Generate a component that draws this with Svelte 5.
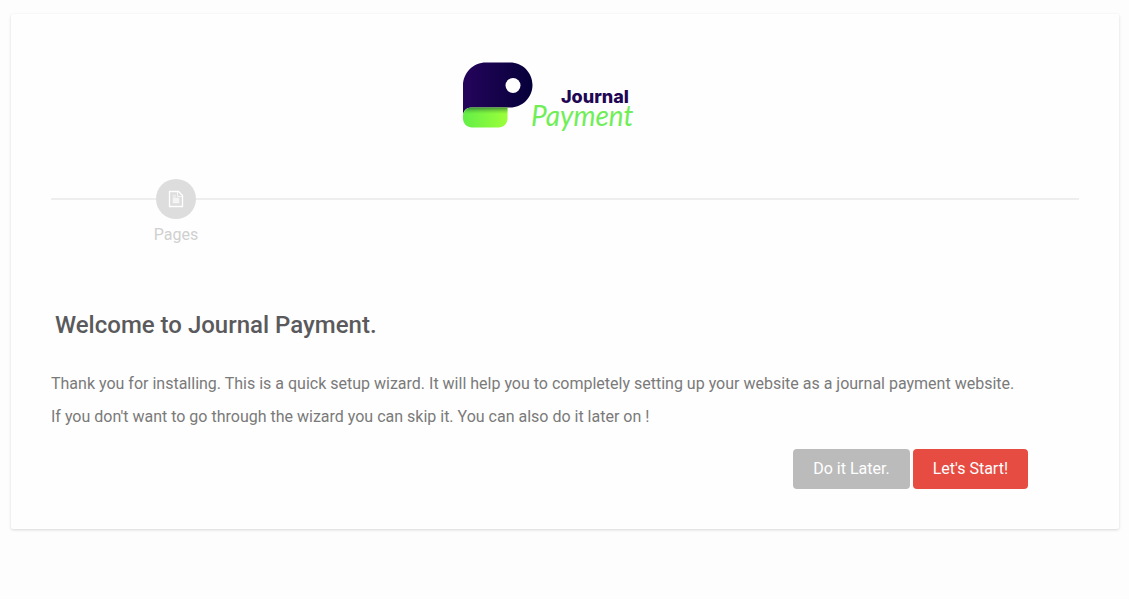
<script>
  let started = $state(false);
  let skipped = $state(false);

  const steps = [{ id: "pages", label: "Pages" }];
</script>

<main class="wizard">
  <header class="brand">
    <svg class="logo" viewBox="0 0 176 74" role="img" aria-label="Journal Payment">
      <defs>
        <linearGradient id="top" x1="0" y1="0" x2="1" y2="0">
          <stop offset="0" stop-color="#25045c" />
          <stop offset="1" stop-color="#050039" />
        </linearGradient>
        <linearGradient id="foot" x1="0" y1="0" x2="1" y2="0">
          <stop offset="0" stop-color="#63ee48" />
          <stop offset="1" stop-color="#9cff39" />
        </linearGradient>
        <linearGradient id="shade" x1="0" y1="0" x2="0" y2="1">
          <stop offset="0" stop-color="#17452e" stop-opacity="0.6" />
          <stop offset="1" stop-color="#4cae38" stop-opacity="0" />
        </linearGradient>
      </defs>
      <path
        fill="url(#top)"
        d="M1 55V23.500C1 11 11 .5 24 .5H48C60.500 .5 70.500 10.500 70.500 23S60.500 45.500 48 45.500H9C4 45.500 1 49 1 55Z"
      />
      <path
        fill="url(#foot)"
        d="M1 54C1 49 4.500 45.500 9.500 45.500H45.500V56.500C45.500 61.500 41.500 65.500 36.500 65.500H10C5 65.500 1 61.500 1 56.500Z"
      />
      <path fill="url(#shade)" d="M9.500 45.500H45.500V52H2C3 48 5.500 45.500 9.500 45.500Z" />
      <circle cx="51" cy="23.500" r="7.500" fill="#fff" />
      <text class="name" x="99" y="41">Journal</text>
      <text class="script" x="69" y="64">Payment</text>
    </svg>
  </header>

  <ol class="steps">
    {#each steps as step (step.id)}
      <li class="step">
        <span class="step-icon">
          <svg viewBox="0 0 16 18" aria-hidden="true">
            <path d="M1.500 1.500H10.500L14.500 5.500V16.500H1.500Z" fill="none" stroke="#fff" stroke-width="1.300" />
            <path d="M9.500 2V6.500H14" fill="none" stroke="#fff" stroke-opacity="0.700" />
            <path d="M4.500 4.500H8V7.500H11.500V13.500H4.500Z" fill="#fff" fill-opacity="0.400" />
            <rect x="5" y="8" width="6" height="5" fill="#fff" fill-opacity="0.500" />
          </svg>
        </span>
        <span class="step-label">{step.label}</span>
      </li>
    {/each}
  </ol>

  <section class="content">
    <h1>Welcome to Journal Payment.</h1>
    <p>
      Thank you for installing. This is a quick setup wizard. It will help you to completely setting
      up your website as a journal payment website.
    </p>
    <p>If you don't want to go through the wizard you can skip it. You can also do it later on !</p>
  </section>

  <div class="actions">
    <button type="button" class="later" onclick={() => (skipped = true)} disabled={skipped}>
      Do it Later.
    </button>
    <button type="button" class="start" onclick={() => (started = true)} disabled={started}>
      Let's Start!
    </button>
  </div>
</main>

<style>
  :global(body) {
    background: #fdfdfd;
  }

  :global(#app) {
    display: flow-root;
    padding-bottom: 20px;
  }

  .wizard {
    margin: 14px 10px 0 11px;
    padding: 48px 40px 40px;
    background: #fefefe;
    border-radius: 2px;
    box-shadow: 0 1px 3px rgba(0, 0, 0, 0.15);
    font-family: Roboto, sans-serif;
    font-size: 16px;
    color: #7a7a7a;
  }

  .brand {
    display: flex;
    justify-content: center;
    padding: 0 30px 43px 0;
  }

  .logo {
    width: 176px;
    height: 74px;
    overflow: visible;
  }

  .name {
    font-family: Inter, sans-serif;
    font-size: 18px;
    font-weight: 800;
    fill: #210753;
  }

  .script {
    font-family: "Segoe Script", "Bradley Hand", Lato, cursive;
    font-size: 28px;
    font-style: italic;
    font-weight: 400;
    fill: #70ee58;
  }

  .steps {
    display: grid;
    grid-template-columns: repeat(auto-fill, 250px);
    margin: 0;
    padding: 0;
    list-style: none;
    background: linear-gradient(#eee, #eee) 0 19px / 100% 2px no-repeat;
  }

  .step {
    display: flex;
    flex-direction: column;
    align-items: center;
    gap: 4px;
    line-height: 24px;
    color: #d0d0d0;
  }

  .step-icon {
    display: flex;
    align-items: center;
    justify-content: center;
    width: 40px;
    height: 40px;
    border-radius: 50%;
    background: #ddd;
  }

  .step-icon svg {
    width: 16px;
    height: 18px;
  }

  .content {
    padding-top: 60px;
    line-height: 33px;
  }

  h1 {
    margin: 0 4px 24px;
    font-size: 24px;
    font-weight: 500;
    line-height: 36px;
    color: #5a5a5c;
  }

  p {
    margin: 0;
  }

  .actions {
    display: flex;
    justify-content: flex-end;
    gap: 3px;
    padding: 16px 51px 0 0;
  }

  button {
    height: 40px;
    padding: 0 20px 2px;
    border: 0;
    border-radius: 4px;
    font: inherit;
    color: #fff;
    cursor: pointer;
  }

  .later {
    background: #bbb;
  }

  .start {
    background: #e64c42;
  }
</style>
